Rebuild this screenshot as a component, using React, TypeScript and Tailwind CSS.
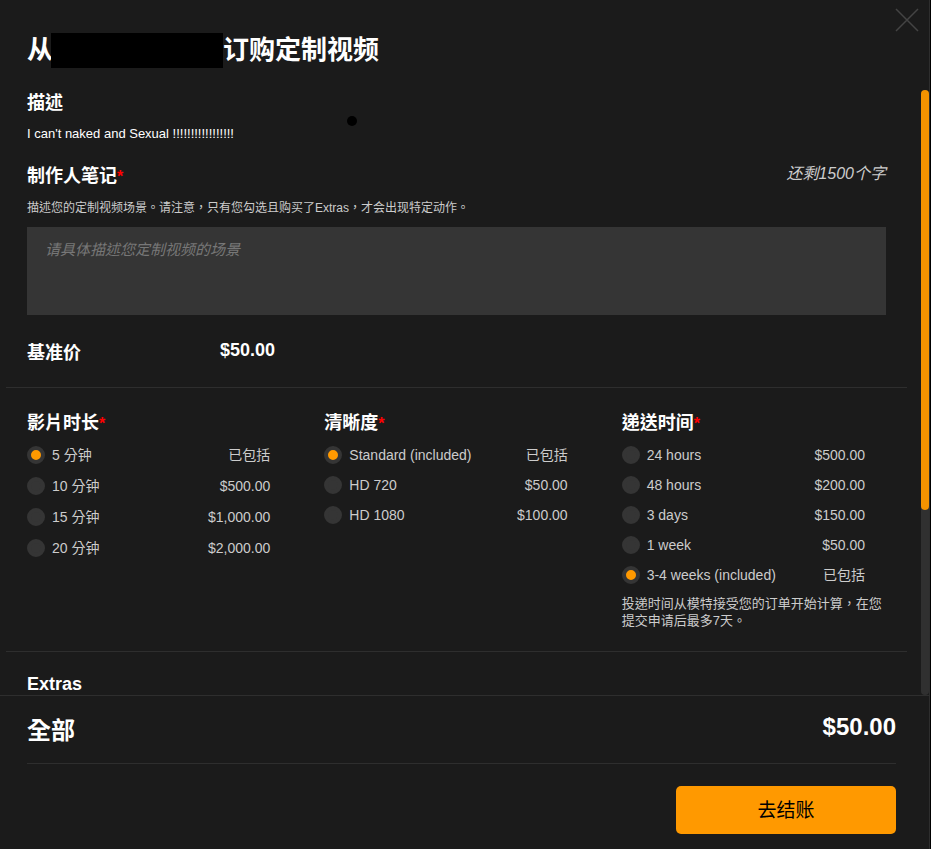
import React, { useState } from "react";

interface Option {
  label: string;
  price: string;
}

interface OptionGroupProps {
  title: string;
  name: string;
  options: Option[];
  selected: number;
  rowClass?: string;
  note?: string;
}

const durations: Option[] = [
  { label: "5 分钟", price: "已包括" },
  { label: "10 分钟", price: "$500.00" },
  { label: "15 分钟", price: "$1,000.00" },
  { label: "20 分钟", price: "$2,000.00" },
];

const resolutions: Option[] = [
  { label: "Standard (included)", price: "已包括" },
  { label: "HD 720", price: "$50.00" },
  { label: "HD 1080", price: "$100.00" },
];

const deliveries: Option[] = [
  { label: "24 hours", price: "$500.00" },
  { label: "48 hours", price: "$200.00" },
  { label: "3 days", price: "$150.00" },
  { label: "1 week", price: "$50.00" },
  { label: "3-4 weeks (included)", price: "已包括" },
];

const Required = () => <span className="text-[16px] leading-none text-[#ff0000]">*</span>;

const OptionGroup: React.FC<OptionGroupProps> = ({
  title,
  name,
  options,
  selected,
  rowClass = "h-[30px]",
  note,
}) => {
  const [value, setValue] = useState(selected);

  return (
    <fieldset className="min-w-0">
      <legend className="text-[18px] leading-6 font-bold text-white">
        {title}
        <Required />
      </legend>
      <div className="mt-2 pr-[30px]">
        {options.map((option, i) => (
          <label
            key={option.label}
            className={`flex cursor-pointer items-start text-[14px] leading-6 text-[#ccc] ${rowClass}`}
          >
            <input
              type="radio"
              name={name}
              checked={value === i}
              onChange={() => setValue(i)}
              className="mt-[3px] mr-[7px] size-[18px] shrink-0 appearance-none rounded-full border-4 border-[#353535] bg-[#353535] checked:bg-[#ff9900]"
            />
            <span className="flex-1">{option.label}</span>
            <span>{option.price}</span>
          </label>
        ))}
      </div>
      {note && <p className="mt-0.5 pr-2 text-[13px] leading-[17px] text-[#ccc]">{note}</p>}
    </fieldset>
  );
};

const App: React.FC = () => {
  const [notes, setNotes] = useState("");

  return (
    <div className="h-screen bg-black pr-px font-['Liberation_Sans','Noto_Sans_CJK_TC',sans-serif]">
      <div className="relative flex h-full flex-col border-r border-[#2e2e2e] bg-[#1b1b1b] text-white">
        <button aria-label="Close" className="absolute top-2 right-2.5 text-[#444]">
          <svg width="24" height="24" viewBox="0 0 24 24" fill="none" stroke="currentColor" strokeWidth="1.5">
            <path d="M1 1l22 22M23 1L1 23" />
          </svg>
        </button>
        <span className="absolute top-[116px] left-[347px] size-2.5 rounded-full bg-black" />

        <header className="flex h-[90px] shrink-0 items-center px-[27px] pt-[11px]">
          <h1 className="flex items-center text-[26px] leading-[35px] font-bold">
            <span className="w-6">从</span>
            <span className="h-[35px] w-[172px] bg-black" />
            <span>订购定制视频</span>
          </h1>
        </header>

        <div className="flex min-h-0 flex-1">
          <main className="min-w-0 flex-1 overflow-hidden pr-3.5 pl-1.5">
            <section className="px-[21px] pt-px">
              <h2 className="text-[18px] leading-6 font-bold">描述</h2>
              <p className="mt-[9px] text-[13px] leading-5">I can't naked and Sexual !!!!!!!!!!!!!!!!!</p>

              <div className="mt-5 flex items-start justify-between">
                <label htmlFor="notes" className="text-[18px] leading-6 font-bold">
                  制作人笔记
                  <Required />
                </label>
                <span className="text-[16px] leading-5 text-[#ccc] italic">还剩1500个字</span>
              </div>
              <p className="mt-2.5 text-[12px] leading-5 text-[#ccc]">
                描述您的定制视频场景。请注意，只有您勾选且购买了Extras，才会出现特定动作。
              </p>
              <textarea
                id="notes"
                value={notes}
                onChange={(e) => setNotes(e.target.value)}
                placeholder="请具体描述您定制视频的场景"
                className="mt-[9px] block h-[88px] w-full resize-none bg-[#353535] px-[18px] py-3 text-[15px] leading-[22px] outline-none placeholder:text-[#777] placeholder:italic"
              />

              <div className="mt-[23px] flex h-[49px] items-start text-[18px] leading-6 font-bold">
                <span className="w-[193px] pt-[3px]">基准价</span>
                <span>$50.00</span>
              </div>
            </section>

            <section className="grid grid-cols-3 gap-x-6 border-y border-[#2e2e2e] pt-[23px] pr-3 pb-[22px] pl-[21px]">
              <OptionGroup
                title="影片时长"
                name="duration"
                options={durations}
                selected={0}
                rowClass="h-[31px]"
              />
              <OptionGroup title="清晰度" name="resolution" options={resolutions} selected={0} />
              <OptionGroup
                title="递送时间"
                name="delivery"
                options={deliveries}
                selected={4}
                note="投递时间从模特接受您的订单开始计算，在您提交申请后最多7天。"
              />
            </section>

            <section className="px-[21px] pt-5">
              <h2 className="text-[18px] leading-6 font-bold">Extras</h2>
            </section>
          </main>

          {/* scroll track */}
          <div className="w-2 shrink-0 rounded-full bg-[#303030]">
            <div className="h-[69.5%] rounded-full bg-[#f59300]" />
          </div>
        </div>

        <footer className="shrink-0 border-t border-[#2e2e2e] pr-[33px] pb-[15px] pl-[27px]">
          <div className="flex h-[68px] items-start justify-between border-b border-[#2e2e2e] pt-[15px] text-[24px] leading-8 font-bold">
            <span className="pt-1">全部</span>
            <span>$50.00</span>
          </div>
          <div className="flex justify-end pt-[22px]">
            <button className="h-12 w-[220px] rounded-[5px] bg-[#ff9900] pt-0.5 text-[19px] text-black">
              去结账
            </button>
          </div>
        </footer>
      </div>
    </div>
  );
};

export default App;
